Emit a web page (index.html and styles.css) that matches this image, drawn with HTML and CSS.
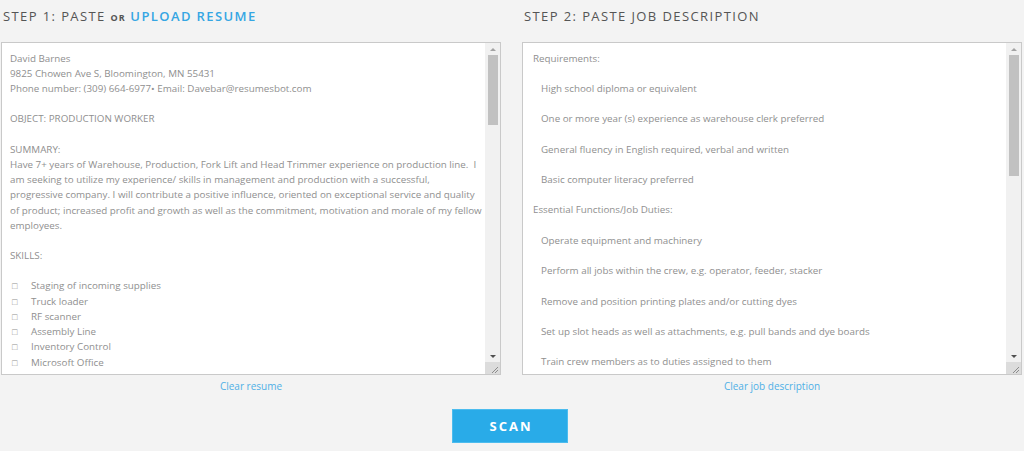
FILE: index.html
```html
<!DOCTYPE html>
<html lang="en">
<head>
<meta charset="utf-8">
<title>Resume Scan</title>
<link rel="stylesheet" href="styles.css">
</head>
<body>
<main class="page">
  <div class="columns">
    <section class="col">
      <h2 class="step">STEP 1: PASTE <span class="or">OR</span> <a class="upload" href="#">UPLOAD RESUME</a></h2>
      <div class="box">
        <div class="content">
          <p>David Barnes</p>
          <p>9825 Chowen Ave S, Bloomington, MN 55431</p>
          <p>Phone number: (309) 664-6977• Email: Davebar@resumesbot.com</p>
          <p class="blank"></p>
          <p>OBJECT: PRODUCTION WORKER</p>
          <p class="blank"></p>
          <p>SUMMARY:</p>
          <p>Have 7+ years of Warehouse, Production, Fork Lift and Head Trimmer experience on production line.&nbsp; I am seeking to utilize my experience/ skills in management and production with a successful, progressive company. I will contribute a positive influence, oriented on exceptional service and quality of product; increased profit and growth as well as the commitment, motivation and morale of my fellow employees.</p>
          <p class="blank"></p>
          <p>SKILLS:</p>
          <p class="blank"></p>
          <p class="item"><span class="sq">□</span>Staging of incoming supplies</p>
          <p class="item"><span class="sq">□</span>Truck loader</p>
          <p class="item"><span class="sq">□</span>RF scanner</p>
          <p class="item"><span class="sq">□</span>Assembly Line</p>
          <p class="item"><span class="sq">□</span>Inventory Control</p>
          <p class="item"><span class="sq">□</span>Microsoft Office</p>
        </div>
        <div class="scrollbar">
          <span class="arrow up"></span>
          <div class="track"><div class="thumb thumb-left"></div></div>
          <span class="arrow down"></span>
          <span class="grip"><svg width="12" height="12" viewBox="0 0 12 12"><path d="M11 5 L5 11 M11 8 L8 11" stroke="#8c8c8c" stroke-width="1" fill="none"/></svg></span>
        </div>
      </div>
      <a class="clear" href="#">Clear resume</a>
    </section>
    <section class="col">
      <h2 class="step">STEP 2: PASTE JOB DESCRIPTION</h2>
      <div class="box">
        <div class="content jd">
          <p class="head">Requirements:</p>
          <p class="gap">High school diploma or equivalent</p>
          <p class="gap">One or more year (s) experience as warehouse clerk preferred</p>
          <p class="gap">General fluency in English required, verbal and written</p>
          <p class="gap">Basic computer literacy preferred</p>
          <p class="head">Essential Functions/Job Duties:</p>
          <p class="gap">Operate equipment and machinery</p>
          <p class="gap">Perform all jobs within the crew, e.g. operator, feeder, stacker</p>
          <p class="gap">Remove and position printing plates and/or cutting dyes</p>
          <p class="gap">Set up slot heads as well as attachments, e.g. pull bands and dye boards</p>
          <p class="gap">Train crew members as to duties assigned to them</p>
        </div>
        <div class="scrollbar">
          <span class="arrow up"></span>
          <div class="track"><div class="thumb thumb-right"></div></div>
          <span class="arrow down"></span>
          <span class="grip"><svg width="12" height="12" viewBox="0 0 12 12"><path d="M11 5 L5 11 M11 8 L8 11" stroke="#8c8c8c" stroke-width="1" fill="none"/></svg></span>
        </div>
      </div>
      <a class="clear" href="#">Clear job description</a>
    </section>
  </div>
  <div class="actions">
    <button class="scan" type="button">SCAN</button>
  </div>
</main>
</body>
</html>
```

FILE: styles.css
```css
* { box-sizing: border-box; }
html, body { margin: 0; padding: 0; }
body {
  background: #f3f3f3;
  font-family: "Open Sans", "Liberation Sans", sans-serif;
  width: 1024px;
  height: 451px;
  overflow: hidden;
}
.page {
  padding: 5px 0 0 1px;
}
.columns {
  display: grid;
  grid-template-columns: 500px 500px;
  column-gap: 21px;
}
.col {
  display: flex;
  flex-direction: column;
}
.step {
  margin: 0 0 15px 2px;
  height: 22px;
  font-size: 13px;
  line-height: 22px;
  font-weight: 400;
  letter-spacing: 1.4px;
  color: #555;
  white-space: nowrap;
}
.or {
  font-size: 9px;
  line-height: 0;
  font-weight: 700;
  letter-spacing: 1px;
  color: #555;
}
.upload {
  color: #35a6e3;
  font-weight: 600;
  text-decoration: none;
}
.box {
  display: flex;
  height: 333px;
  background: #fff;
  border: 1px solid #c9c9c9;
}
.content {
  flex: 1;
  overflow: hidden;
  padding: 7.5px 0 0 8px;
  font-size: 9.8px;
  line-height: 15.2px;
  color: #8f8f8f;
}
.content p {
  margin: 0;
  min-height: 15.2px;
}
.item {
  display: flex;
}
.sq {
  width: 21px;
  padding-left: 2px;
  font-size: 9px;
}
.jd {
  padding-left: 10px;
}
.jd .gap {
  padding-left: 8px;
  margin-top: 15.2px;
}
.jd .head:not(:first-child) { margin-top: 15.2px; }
.scrollbar {
  width: 15px;
  display: flex;
  flex-direction: column;
  background: #f1f1f1;
  flex: none;
}
.arrow {
  height: 12px;
  display: flex;
  align-items: center;
  justify-content: center;
  flex: none;
}
.arrow::before {
  content: "";
  width: 0;
  height: 0;
  border-left: 3px solid transparent;
  border-right: 3px solid transparent;
}
.arrow.up::before { border-bottom: 3px solid #a3a3a3; }
.arrow.down::before { border-top: 3px solid #505050; }
.track {
  flex: 1;
  display: flex;
  justify-content: center;
}
.thumb {
  width: 10px;
  background: #c1c1c1;
}
.thumb-left { height: 70px; }
.thumb-right { height: 121px; }
.grip {
  height: 12px;
  flex: none;
  background: #dcdcdc;
  display: flex;
}
.grip svg { display: block; margin-left: 2px; }
.clear {
  align-self: center;
  margin-top: 4px;
  font-size: 10px;
  line-height: 15px;
  color: #4fb0e6;
  text-decoration: none;
}
.actions {
  display: flex;
  justify-content: center;
  padding: 15px 0 0 0;
  margin-left: -5px;
}
.scan {
  width: 116px;
  height: 34px;
  background: #29abe8;
  border: 1px solid #4cbcee;
  color: #fff;
  font-family: "Open Sans", "Liberation Sans", sans-serif;
  font-size: 13px;
  font-weight: 700;
  letter-spacing: 2px;
  padding: 0 0 0 2px;
  cursor: pointer;
}
```
